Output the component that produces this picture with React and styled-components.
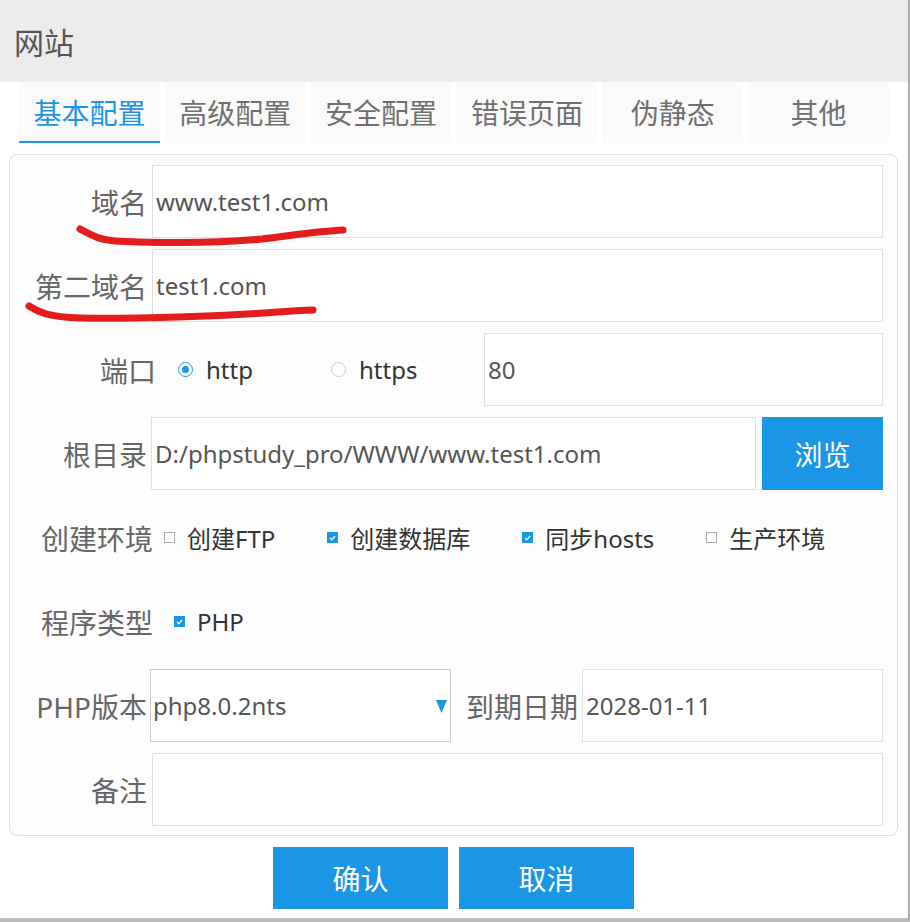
import styled, { createGlobalStyle } from 'styled-components';

const GlobalStyle = createGlobalStyle`
  html, body {
    margin: 0;
    padding: 0;
    background: #fff;
  }
  * {
    box-sizing: border-box;
  }
`;

const BLUE = '#1b95e5';
const FONT = `"Noto Sans", "Noto Sans CJK SC", sans-serif`;

const Window = styled.div`
  position: relative;
  width: 910px;
  height: 922px;
  background: #fff;
  border-right: 2px solid #a9a9a9;
  border-bottom: 4px solid #bcbcbc;
  font-family: ${FONT};
  overflow: hidden;
`;

const Header = styled.div`
  height: 82px;
  background: #ececec;
  display: flex;
  align-items: center;
  padding-left: 14px;
  font-size: 30px;
  color: #555;
`;

const TabBar = styled.div`
  display: flex;
  gap: 5px;
  padding: 0 19px;
  height: 61px;
`;

const Tab = styled.div`
  width: 141px;
  display: flex;
  align-items: center;
  justify-content: center;
  background: #fafafa;
  font-size: 28px;
  color: ${p => (p.$active ? BLUE : '#707070')};
  border-bottom: 2px solid ${p => (p.$active ? BLUE : 'transparent')};
`;

const Panel = styled.div`
  margin: 11px 10px 0 9px;
  border: 1px solid #dedede;
  border-radius: 8px;
  background: #fdfdfd;
  padding: 10px 14px 9px 0;
  display: flex;
  flex-direction: column;
  gap: 11px;
`;

const Row = styled.div`
  display: flex;
  align-items: center;
  height: 73px;
`;

const Label = styled.div`
  flex-shrink: 0;
  width: ${p => p.$w || 137}px;
  margin-right: ${p => p.$gap ?? 5}px;
  text-align: right;
  font-size: 28px;
  color: #666;
  white-space: nowrap;
`;

const Field = styled.input`
  flex: ${p => (p.$flex ? 1 : 'none')};
  min-width: 0;
  height: 73px;
  margin-left: ${p => p.$ml || 0}px;
  border: 1px solid #dedede;
  background: #fff;
  padding: 0 0 0 3px;
  font-family: ${FONT};
  font-size: 24px;
  color: #555;
  outline: none;
`;

const Note = styled.textarea`
  flex: 1;
  height: 73px;
  border: 1px solid #dedede;
  background: #fff;
  resize: none;
  outline: none;
`;

const BrowseButton = styled.button`
  width: 121px;
  height: 73px;
  margin-left: 6px;
  border: none;
  background: ${BLUE};
  color: #fff;
  font-family: ${FONT};
  font-size: 28px;
`;

const RadioOption = styled.label`
  width: 153px;
  padding-left: 22px;
  display: flex;
  align-items: center;
  gap: 13px;
  font-size: 24px;
  color: #333;
`;

const RadioDot = styled.span`
  width: 15px;
  height: 15px;
  border-radius: 50%;
  border: 1px solid ${p => (p.$on ? BLUE : '#ccc')};
  display: flex;
  align-items: center;
  justify-content: center;
  &::after {
    content: '';
    width: 7px;
    height: 7px;
    border-radius: 50%;
    background: ${p => (p.$on ? BLUE : 'transparent')};
  }
`;

const CheckGroup = styled.div`
  display: flex;
  align-items: center;
  gap: 52px;
  margin-left: ${p => p.$ml || 0}px;
`;

const CheckOption = styled.label`
  display: flex;
  align-items: center;
  gap: 12px;
  font-size: 24px;
  color: #333;
`;

const Box = styled.span`
  width: 11px;
  height: 11px;
  border: 1px solid ${p => (p.$on ? BLUE : '#aaa')};
  background: ${p => (p.$on ? BLUE : '#fff')};
  display: flex;
  align-items: center;
  justify-content: center;
`;

const Select = styled.div`
  position: relative;
  width: 301px;
  height: 73px;
  border: 1px solid #cbcbcb;
  background: #fff;
  display: flex;
  align-items: center;
  padding-left: 2px;
  font-size: 24px;
  color: #555;
`;

const Caret = styled.svg`
  position: absolute;
  right: 3px;
  top: 30px;
`;

const Footer = styled.div`
  display: flex;
  justify-content: center;
  gap: 11px;
  margin-top: 11px;
  padding-right: 1px;
`;

const ActionButton = styled.button`
  width: 175px;
  height: 62px;
  border: none;
  background: ${BLUE};
  color: #fff;
  font-family: ${FONT};
  font-size: 28px;
`;

const Scribble = styled.svg`
  position: absolute;
  left: 0;
  top: 0;
  pointer-events: none;
`;

function Check({ on, children }) {
  return (
    <CheckOption>
      <Box $on={on}>
        {on && (
          <svg width="7" height="6" viewBox="0 0 7 6">
            <path d="M1 3l1.8 1.8L6 1" fill="none" stroke="#fff" strokeWidth="1.2" />
          </svg>
        )}
      </Box>
      {children}
    </CheckOption>
  );
}

const tabs = ['基本配置', '高级配置', '安全配置', '错误页面', '伪静态', '其他'];

export default function App() {
  return (
    <Window>
      <GlobalStyle />
      <Header>网站</Header>
      <TabBar>
        {tabs.map((t, i) => (
          <Tab key={t} $active={i === 0}>{t}</Tab>
        ))}
      </TabBar>

      <Panel>
        <Row>
          <Label>域名</Label>
          <Field $flex readOnly value="www.test1.com" />
        </Row>
        <Row>
          <Label>第二域名</Label>
          <Field $flex readOnly value="test1.com" />
        </Row>
        <Row>
          <Label $w={146} $gap={0}>端口</Label>
          <RadioOption><RadioDot $on />http</RadioOption>
          <RadioOption><RadioDot />https</RadioOption>
          <Field $flex $ml={22} readOnly value="80" />
        </Row>
        <Row>
          <Label $gap={4}>根目录</Label>
          <Field $flex readOnly value="D:/phpstudy_pro/WWW/www.test1.com" />
          <BrowseButton>浏览</BrowseButton>
        </Row>
        <Row>
          <Label $w={143} $gap={0}>创建环境</Label>
          <CheckGroup $ml={11}>
            <Check>创建FTP</Check>
            <Check on>创建数据库</Check>
            <Check on>同步hosts</Check>
            <Check>生产环境</Check>
          </CheckGroup>
        </Row>
        <Row>
          <Label $w={143} $gap={0}>程序类型</Label>
          <CheckGroup $ml={21}>
            <Check on>PHP</Check>
          </CheckGroup>
        </Row>
        <Row>
          <Label $gap={3}>PHP版本</Label>
          <Select>
            php8.0.2nts
            <Caret width="11" height="13" viewBox="0 0 11 13">
              <polygon points="0,0 11,0 5.5,13" fill={BLUE} />
            </Caret>
          </Select>
          <Label $w={127} $gap={4}>到期日期</Label>
          <Field $flex readOnly value="2028-01-11" />
        </Row>
        <Row>
          <Label $w={137} $gap={5}>备注</Label>
          <Note readOnly />
        </Row>
      </Panel>

      <Footer>
        <ActionButton>确认</ActionButton>
        <ActionButton>取消</ActionButton>
      </Footer>

      <Scribble width="910" height="922">
        <g fill="none" stroke="#e31c1c" strokeWidth="7" strokeLinecap="round" strokeLinejoin="round">
          <path d="M80 229 C90 234 98 240 115 241 C160 243 220 243 262 239 C295 235 320 231 343 230" />
          <path d="M29 306 C38 312 48 317 80 318 C140 319 220 316 265 313 C290 311 305 310 313 310" />
        </g>
      </Scribble>
    </Window>
  );
}
